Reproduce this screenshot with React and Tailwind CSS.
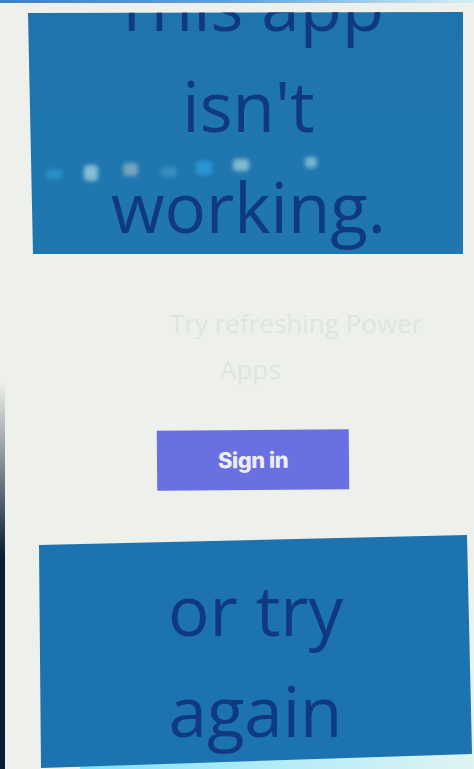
const font = "font-['Open_Sans','Noto_Sans',sans-serif]";

function Panel({ className, linesClassName, lines }) {
  return (
    <div className={`flex flex-col items-center overflow-hidden text-[#0f3a80] font-normal ${font} ${className}`}>
      <div className={`flex flex-col items-center ${linesClassName}`}>
        {lines.map(line => (
          <div key={line} className="whitespace-nowrap text-[69px] leading-[101px]">{line}</div>
        ))}
      </div>
    </div>
  );
}

// the smudges that run across the first panel
const smudges = [
  { left: "left-[46px]", top: "top-[169px]", size: "w-[16px] h-[10px]", color: "bg-[#2f9bd0]/70" },
  { left: "left-[84px]", top: "top-[165px]", size: "w-[14px] h-[16px]", color: "bg-[#8fc4dc]/90" },
  { left: "left-[123px]", top: "top-[163px]", size: "w-[15px] h-[13px]", color: "bg-[#7fa9bf]/90" },
  { left: "left-[161px]", top: "top-[167px]", size: "w-[16px] h-[10px]", color: "bg-[#3f95c6]/80" },
  { left: "left-[196px]", top: "top-[161px]", size: "w-[16px] h-[14px]", color: "bg-[#2b9ad6]/90" },
  { left: "left-[233px]", top: "top-[159px]", size: "w-[16px] h-[12px]", color: "bg-[#8fc0d4]/90" },
  { left: "left-[305px]", top: "top-[157px]", size: "w-[12px] h-[11px]", color: "bg-[#7fbcd6]/90" },
];

export default function App() {
  return (
    <div className="relative flex h-[769px] w-[474px] flex-col overflow-hidden bg-[#eef0ec]">
      <div className="h-[3px] bg-gradient-to-r from-[#3b82c4] via-[#5fa3dc] to-[#d5eef5]" />

      <Panel
        className="mt-[9px] ml-[28px] h-[242px] w-[435px] justify-end bg-gradient-to-b from-[#1f74ad] to-[#2077b0] pl-[6px] [clip-path:polygon(0_1px,100%_0,100%_100%,5px_100%)]"
        linesClassName="-mb-[3px]"
        lines={["This app", "isn't", "working."]}
      />
      {smudges.map(s => (
        <div key={s.left} className={`absolute rounded-[4px] blur-[2px] ${s.left} ${s.top} ${s.size} ${s.color}`} />
      ))}

      <div className={`mt-[46px] ml-[170px] h-[130px] text-[26px] leading-[46px] text-[#e0e5e2] ${font}`}>
        <div className="whitespace-nowrap">Try refreshing Power</div>
        <div className="ml-[50px]">Apps</div>
      </div>

      <button className="ml-[157px] flex h-[60px] w-[192px] -rotate-[0.5deg] items-center justify-center bg-[#6a6fe2] font-['Inter',sans-serif] text-[22px] font-extrabold tracking-[-0.5px] text-[#eceef0]">
        Sign in
      </button>

      <div className="mt-[45px] flex-1">
        <div className="absolute right-0 bottom-0 left-[80px] h-[16px] bg-gradient-to-r from-[#7fe3fa] to-[#dff3f2]" />
        <Panel
          className="ml-[39px] h-[233px] w-[433px] bg-[#1d72b0] pt-[24px] [clip-path:polygon(0_10px,428px_0,433px_219px,2px_100%)]"
          lines={["or try", "again"]}
        />
      </div>

      <div className="absolute bottom-0 left-0 h-[387px] w-[5px] bg-gradient-to-b from-transparent via-[#0c1e33] via-[45%] to-[#0a1c33]" />
    </div>
  );
}
